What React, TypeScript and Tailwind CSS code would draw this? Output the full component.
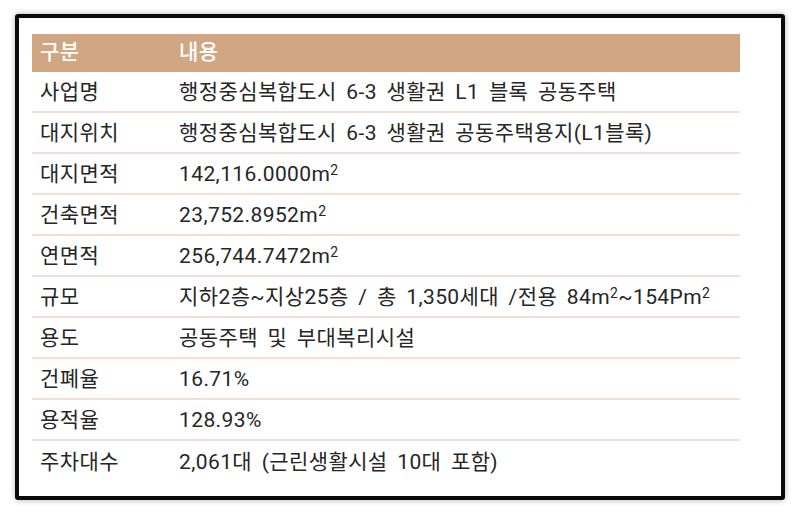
import React from "react"

const M2 = () => (
  <>
    m<sup className="text-[14px] -top-[0.45em]">2</sup>
  </>
)

const rows: [string, React.ReactNode][] = [
  ["사업명", "행정중심복합도시 6-3 생활권 L1 블록 공동주택"],
  ["대지위치", "행정중심복합도시 6-3 생활권 공동주택용지(L1블록)"],
  ["대지면적", <>142,116.0000<M2 /></>],
  ["건축면적", <>23,752.8952<M2 /></>],
  ["연면적", <>256,744.7472<M2 /></>],
  ["규모", <>지하2층~지상25층 / 총 1,350세대 /전용 84<M2 />~154P<M2 /></>],
  ["용도", "공동주택 및 부대복리시설"],
  ["건폐율", "16.71%"],
  ["용적율", "128.93%"],
  ["주차대수", "2,061대 (근린생활시설 10대 포함)"],
]

export default function App() {
  return (
    <div
      className="w-[800px] h-[514px] bg-white pt-[14px] pl-[15px]"
      style={{ fontFamily: "Roboto, 'Noto Sans CJK KR', sans-serif" }}
    >
      <div className="w-[770px] h-[486px] border-4 border-[#0a0a0a] rounded-[3px] bg-white shadow-[0_0_6px_rgba(0,0,0,0.3)] pt-[16px] pl-[13px]">
        <div className="w-[708px] text-[21px] text-[#262626] tracking-[0.4px]">
          <div className="flex h-[38px] items-center bg-[#d0a683] text-white font-medium">
            <div className="w-[139px] pl-2">구분</div>
            <div className="pl-2">내용</div>
          </div>
          {rows.map(([k, v], i) => (
            <div
              key={k}
              className={
                "flex h-[41px] items-center pt-[3px]" +
                (i < rows.length - 1 ? " border-b-2 border-[#f4e0d2]" : "")
              }
            >
              <div className="w-[139px] pl-2">{k}</div>
              <div className="pl-2 whitespace-nowrap [word-spacing:4px]">{v}</div>
            </div>
          ))}
        </div>
      </div>
    </div>
  )
}
